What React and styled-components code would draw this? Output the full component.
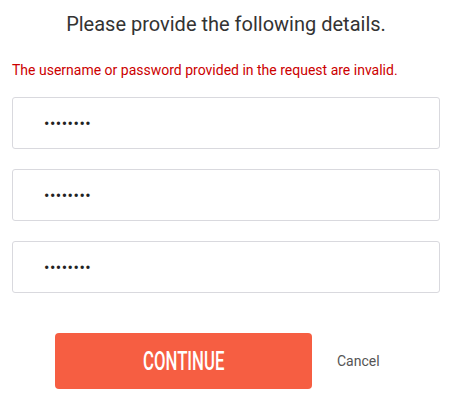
import React from "react";
import styled, { createGlobalStyle } from "styled-components";

const GlobalStyle = createGlobalStyle`
  body {
    margin: 0;
    background: #ffffff;
    font-family: Roboto, "Noto Sans", sans-serif;
  }
`;

const Wrapper = styled.div`
  width: 428px;
  padding: 11px 16px 0 12px;
`;

const Title = styled.h2`
  margin: 0;
  text-align: center;
  font-size: 20px;
  font-weight: 400;
  line-height: 26px;
  color: #333333;
`;

const ErrorText = styled.p`
  margin: 25px 0 0;
  font-size: 14px;
  line-height: 16px;
  color: #cc0000;
`;

const Fields = styled.div`
  display: flex;
  flex-direction: column;
  gap: 20px;
  margin-top: 19px;
`;

const Field = styled.input`
  box-sizing: border-box;
  width: 100%;
  height: 52px;
  padding: 0 0 0 31px;
  border: 1px solid #d9d9de;
  border-radius: 3px;
  font-family: Roboto, sans-serif;
  font-size: 16px;
  letter-spacing: 0.5px;
  color: #222222;
  outline: none;
`;

const Actions = styled.div`
  display: flex;
  align-items: center;
  gap: 25px;
  margin-top: 40px;
  padding-left: 43px;
`;

const ContinueButton = styled.button`
  width: 257px;
  height: 56px;
  border: 0;
  border-radius: 4px;
  background: #f65e42;
  color: #ffffff;
  font-family: Roboto, sans-serif;
  cursor: pointer;
`;

const Condensed = styled.span`
  display: inline-block;
  font-size: 25px;
  font-weight: 500;
  transform: scaleX(0.67);
`;

const CancelLink = styled.a`
  font-size: 14px;
  color: #555555;
  text-decoration: none;
  cursor: pointer;
`;

const App = () => {
  return (
    <Wrapper>
      <GlobalStyle />
      <Title>Please provide the following details.</Title>
      <ErrorText>The username or password provided in the request are invalid.</ErrorText>
      <Fields>
        <Field type="password" defaultValue="password" />
        <Field type="password" defaultValue="password" />
        <Field type="password" defaultValue="password" />
      </Fields>
      <Actions>
        <ContinueButton>
          <Condensed>CONTINUE</Condensed>
        </ContinueButton>
        <CancelLink>Cancel</CancelLink>
      </Actions>
    </Wrapper>
  );
};

export default App;
